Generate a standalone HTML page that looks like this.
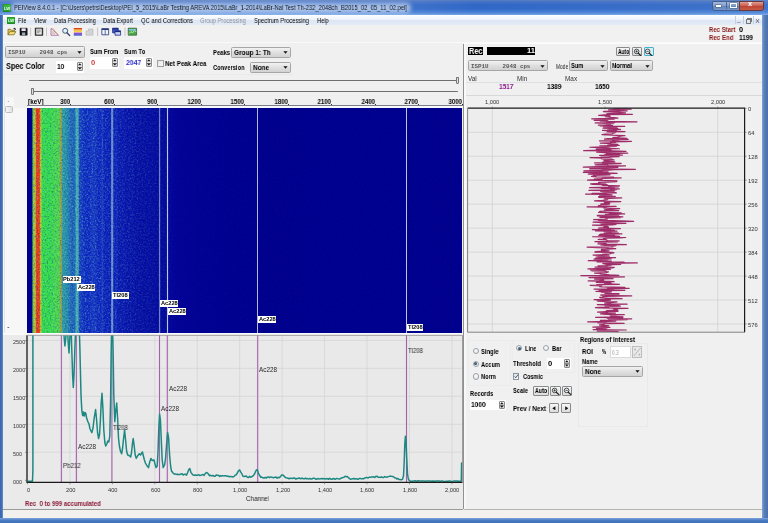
<!DOCTYPE html>
<html><head><meta charset="utf-8"><title>PEIView 8.4.0.1</title>
<style>
html,body{margin:0;padding:0;}
body{width:768px;height:523px;overflow:hidden;position:relative;background:#f0f0f0;font-family:"Liberation Sans",sans-serif;}
.b{position:absolute;display:block;}
.t{position:absolute;white-space:pre;will-change:transform;}
</style></head><body>
<div class="b" style="left:0px;top:0px;width:768px;height:523px;background:#4f84cf;"></div>
<div class="b" style="left:0px;top:0px;width:768px;height:15px;background:linear-gradient(180deg,#5a7ebc 0%,#4472c6 10%,#3067c5 32%,#3069c8 60%,#4a82d6 84%,#74a4e6 100%);"></div>
<div class="b" style="left:0px;top:0px;width:768px;height:15px;background:linear-gradient(90deg,rgba(255,255,255,.12) 0%,rgba(255,255,255,.06) 55%,rgba(255,255,255,.0) 62%,rgba(255,255,255,.08) 100%);"></div>
<div class="b" style="left:0px;top:15px;width:3.4px;height:508px;background:linear-gradient(90deg,#3a66b0,#4470b8 70%,#7a9fd8);"></div>
<div class="b" style="left:762.4px;top:15px;width:5.6px;height:508px;background:linear-gradient(90deg,#86a6d6,#5a80ba 35%,#4a70aa);"></div>
<div class="b" style="left:0px;top:518.3px;width:768px;height:4.7px;background:linear-gradient(180deg,#7fa6dc,#4a7cc4 45%,#3f70b8);"></div>
<div class="b" style="left:3.2px;top:4px;width:8px;height:7.6px;background:linear-gradient(180deg,#3fc03f,#1f9a2a);border-radius:1px;box-shadow:inset 0 0 0 .5px #1d7d1d;"></div>
<div class="t" style="left:4.20px;top:6.58px;font:bold 4.2px/4.83px 'Liberation Sans',sans-serif;color:#e8ffe8;transform:scaleX(0.9527);transform-origin:0 50%;">LW</div>
<div class="b" style="left:11px;top:2.5px;width:400px;height:10.5px;background:rgba(235,242,252,.62);border-radius:5px;filter:blur(2.2px);"></div>
<div class="t" style="left:14.20px;top:4.26px;font:7.2px/8.28px 'Liberation Sans',sans-serif;color:#101820;transform:scaleX(0.8059);transform-origin:0 50%;">PEIView 8.4.0.1 - [C:\Users\petrs\Desktop\PEI_5_2015\LaBr Testing AREVA 2015\LaBr_1-2014\LaBr-NaI Test Th-232_2048ch_B2015_02_05_11_02.pei]</div>
<div class="b" style="left:712px;top:0.8px;width:27px;height:8.6px;background:linear-gradient(180deg,#a4b8da,#7f9cca 48%,#6486be 52%,#7696c8);border:.5px solid #41608f;border-radius:1px 0 0 3px;"></div>
<div class="b" style="left:739px;top:0.8px;width:23.4px;height:8.6px;background:linear-gradient(180deg,#dca096,#c95c4e 48%,#bd4232 52%,#c65c4a);border:.5px solid #6a3838;border-radius:0 1px 3px 0;"></div>
<div class="b" style="left:725.5px;top:0.8px;width:0.6px;height:8.6px;background:#4a6898;"></div>
<div class="b" style="left:716px;top:5.2px;width:5px;height:1.6px;background:#fff;box-shadow:0 0 0 .4px #456;"></div>
<div class="b" style="left:730px;top:2.5px;width:4.5px;height:3.6px;border:1px solid #fff;box-shadow:0 0 0 .4px #456;"></div>
<div class="t" style="left:748.41px;top:0.49px;font:bold 7.5px/8.62px 'Liberation Sans',sans-serif;color:#fff;">x</div>
<div class="b" style="left:3px;top:15px;width:759px;height:10px;background:linear-gradient(180deg,#fdfeff 0%,#eef3fb 45%,#dde6f4 55%,#e3ebf7 100%);"></div>
<div class="b" style="left:6.5px;top:16.5px;width:8.2px;height:7.3px;background:linear-gradient(180deg,#3fc03f,#1f9a2a);border-radius:1px;box-shadow:inset 0 0 0 .5px #1d7d1d;"></div>
<div class="t" style="left:7.60px;top:18.79px;font:bold 4.2px/4.83px 'Liberation Sans',sans-serif;color:#e8ffe8;transform:scaleX(0.9527);transform-origin:0 50%;">LW</div>
<div class="t" style="left:18.30px;top:16.86px;font:7.2px/8.28px 'Liberation Sans',sans-serif;color:#000;transform:scaleX(0.7241);transform-origin:0 50%;">File</div>
<div class="t" style="left:34.30px;top:16.86px;font:7.2px/8.28px 'Liberation Sans',sans-serif;color:#000;transform:scaleX(0.8013);transform-origin:0 50%;">View</div>
<div class="t" style="left:54.00px;top:16.86px;font:7.2px/8.28px 'Liberation Sans',sans-serif;color:#000;transform:scaleX(0.7951);transform-origin:0 50%;">Data Processing</div>
<div class="t" style="left:103.30px;top:16.86px;font:7.2px/8.28px 'Liberation Sans',sans-serif;color:#000;transform:scaleX(0.7891);transform-origin:0 50%;">Data Export</div>
<div class="t" style="left:140.70px;top:16.86px;font:7.2px/8.28px 'Liberation Sans',sans-serif;color:#000;transform:scaleX(0.8173);transform-origin:0 50%;">QC and Corrections</div>
<div class="t" style="left:200.00px;top:16.86px;font:7.2px/8.28px 'Liberation Sans',sans-serif;color:#8a8f98;transform:scaleX(0.7983);transform-origin:0 50%;">Group Processing</div>
<div class="t" style="left:254.30px;top:16.86px;font:7.2px/8.28px 'Liberation Sans',sans-serif;color:#000;transform:scaleX(0.8038);transform-origin:0 50%;">Spectrum Processing</div>
<div class="t" style="left:317.00px;top:16.86px;font:7.2px/8.28px 'Liberation Sans',sans-serif;color:#000;transform:scaleX(0.7902);transform-origin:0 50%;">Help</div>
<div class="t" style="left:736.69px;top:15.46px;font:6.5px/7.47px 'Liberation Sans',sans-serif;color:#667;">_</div>
<div class="b" style="left:745.5px;top:18.5px;width:3.6px;height:3px;border:.7px solid #777;"></div>
<div class="b" style="left:747px;top:17.5px;width:3.6px;height:3px;border:.7px solid #777;border-left:0;border-bottom:0;"></div>
<div class="t" style="left:755.32px;top:16.51px;font:8.5px/9.77px 'Liberation Sans',sans-serif;color:#667;">×</div>
<div class="b" style="left:734.5px;top:16px;width:0.5px;height:8px;background:#c5cfdf;"></div>
<div class="b" style="left:743px;top:16px;width:0.5px;height:8px;background:#c5cfdf;"></div>
<div class="b" style="left:752.5px;top:16px;width:0.5px;height:8px;background:#c5cfdf;"></div>
<div class="b" style="left:3px;top:25px;width:759px;height:493px;background:#f0f0f0;"></div>
<div class="b" style="left:3px;top:25px;width:759px;height:18px;background:#f1f1f2;"></div>
<div class="b" style="left:3px;top:42.4px;width:759px;height:0.9px;background:#f9f9f9;"></div>
<svg class="b" style="left:3px;top:25px" width="140" height="14" viewBox="3 25 140 14">
<g stroke-linejoin="round">
<path d="M8 34.8 V29.3 h2.6 l.8 1 h3.2 v1.2" fill="#e9c75a" stroke="#6b5a14" stroke-width=".7"/>
<path d="M8 34.8 l1.8-3.2 h6 l-1.8 3.2z" fill="#f5de7a" stroke="#6b5a14" stroke-width=".7"/>
<path d="M13.2 28.2 q1.6-.9 2.2.6 l.6-.5 -.2 1.7 -1.6-.3 .6-.5 q-.5-.8-1.6-.4z" fill="#333"/>
<rect x="20" y="28.2" width="7.2" height="7" fill="#1a1a2a" stroke="#000" stroke-width=".5"/>
<rect x="21.5" y="28.4" width="4.2" height="2.6" fill="#e8e8e8"/>
<rect x="22" y="32.5" width="3.2" height="2.6" fill="#9aa"/>
<rect x="35.2" y="28" width="7.6" height="7.4" fill="#2a2a2a" stroke="#000" stroke-width=".5"/>
<rect x="36.2" y="28.6" width="5.6" height="6" fill="#e6e6e6"/>
<path d="M37 30h3.6M37 31.3h3.6M37 32.6h2.4" stroke="#555" stroke-width=".5"/>
<path d="M51 28.3 V35.3 H58.6 Z" fill="#f4eee0" stroke="#8a3a8a" stroke-width=".6"/><path d="M52.6 31.6 V33.8 H55 Z" fill="#fff" stroke="#a86aa8" stroke-width=".4"/>
<path d="M52.6 28 l5.2 6.4" stroke="#c8a24a" stroke-width=".7"/>
<circle cx="65.2" cy="30.8" r="2.5" fill="#dff1fb" stroke="#3b4a6a" stroke-width=".9"/>
<path d="M67 32.8 l2.6 2.6" stroke="#3b4a6a" stroke-width="1.4" stroke-linecap="round"/>
<rect x="73.8" y="28" width="8.2" height="1.3" fill="#e03a1a"/><rect x="73.8" y="29.3" width="8.2" height="1.3" fill="#f08a20"/>
<rect x="73.8" y="30.6" width="8.2" height="1.3" fill="#f4d62a"/><rect x="73.8" y="31.9" width="8.2" height="1.2" fill="#d8a0c8"/>
<rect x="73.8" y="33.1" width="8.2" height="1.2" fill="#8040c0"/><rect x="73.8" y="34.3" width="8.2" height="1.3" fill="#3048c8"/>
<path d="M86 35.2 V31 h2.5 V29 h4.5 v6.2z" fill="#d8d8d8" stroke="#b4b4b4" stroke-width=".6"/>
<path d="M88.5 31 h4.5M88.5 33h4.5" stroke="#c0c0c0" stroke-width=".5"/>
<rect x="101.8" y="28.6" width="6.8" height="6.2" fill="#eef3fb" stroke="#2a3a7a" stroke-width=".8"/>
<rect x="101.8" y="28.6" width="6.8" height="1.4" fill="#2a3a7a"/>
<path d="M105.2 30 v4.8" stroke="#2a3a7a" stroke-width=".7"/>
<rect x="112.6" y="28.2" width="5.6" height="4.6" fill="#4a5ab8" stroke="#1a2a8a" stroke-width=".8"/>
<rect x="112.6" y="28.2" width="5.6" height="1.3" fill="#1a2a8a"/>
<rect x="115" y="30.8" width="5.6" height="4.4" fill="#c8d2f4" stroke="#1a2a8a" stroke-width=".8"/>
<rect x="115" y="30.8" width="5.6" height="1.3" fill="#1a2a8a"/>
<rect x="128.2" y="28.2" width="8.4" height="7" fill="#4aa84a" stroke="#2a5a2a" stroke-width=".7"/>
<path d="M129 33.6 l2-2 1.6 1.2 2-2.4 1.6 1.6" stroke="#e8f4c8" stroke-width=".8" fill="none"/>
<rect x="129" y="29" width="6.8" height="1.6" fill="#7fc7e8"/>
</g>
<path d="M30.6 27.5v8.5M46.5 27.5v8.5M97.6 27.5v8.5M125 27.5v8.5" stroke="#a8a8a8" stroke-width=".6"/>
</svg>
<div class="t" style="left:709.30px;top:26.20px;font:bold 7.3px/8.39px 'Liberation Sans',sans-serif;color:#8b1a1a;transform:scaleX(0.8268);transform-origin:0 50%;">Rec Start</div>
<div class="t" style="left:739.00px;top:26.20px;font:bold 7.3px/8.39px 'Liberation Sans',sans-serif;color:#000;">0</div>
<div class="t" style="left:709.30px;top:34.00px;font:bold 7.3px/8.39px 'Liberation Sans',sans-serif;color:#8b1a1a;transform:scaleX(0.8389);transform-origin:0 50%;">Rec End</div>
<div class="t" style="left:739.00px;top:34.00px;font:bold 7.3px/8.39px 'Liberation Sans',sans-serif;color:#000;transform:scaleX(0.8841);transform-origin:0 50%;">1199</div>
<div class="b" style="left:5px;top:46.4px;width:79.6px;height:11.4px;background:linear-gradient(180deg,#f2f2f2,#dedede 55%,#d2d2d2);border:.6px solid #a6a6a6;border-radius:1.5px;box-sizing:border-box;"></div>
<div class="t" style="left:8.10px;top:49.77px;font:bold 5.8px/6.67px 'Liberation Mono',monospace;color:#555;transform:scaleX(1.0038);transform-origin:0 50%;">ISP1U&nbsp;&nbsp;&nbsp;&nbsp;2048&nbsp;cps</div>
<svg class="b" style="left:76.6px;top:50.9px" width="5" height="3" viewBox="0 0 5 3"><path d="M.4 .2h4.2L2.5 2.8z" fill="#111"/></svg>
<div class="t" style="left:5.60px;top:62.15px;font:bold 8.6px/9.89px 'Liberation Sans',sans-serif;color:#000;transform:scaleX(0.8503);transform-origin:0 50%;">Spec Color</div>
<div class="b" style="left:56px;top:61px;width:27.5px;height:11.5px;background:#fff;"></div>
<div class="t" style="left:57.20px;top:63.08px;font:bold 7.6px/8.74px 'Liberation Sans',sans-serif;color:#000;transform:scaleX(0.8518);transform-origin:0 50%;">10</div>
<div class="b" style="left:77.0px;top:62.2px;width:6px;height:9.1px;background:linear-gradient(180deg,#f4f4f4,#d6d6d6);border:.5px solid #8a8a8a;border-radius:1px;box-sizing:border-box;"></div>
<div class="b" style="left:77.0px;top:66.5px;width:6px;height:0.5px;background:#8a8a8a;"></div>
<svg class="b" style="left:78.2px;top:63.4px" width="3.6" height="6.7" viewBox="0 0 3.6 6.7"><path d="M0 2.2L1.8 .2 3.6 2.2z" fill="#111"/><path d="M0 4.5L1.8 6.5 3.6 4.5z" fill="#111"/></svg>
<div class="t" style="left:89.70px;top:48.43px;font:bold 7.6px/8.74px 'Liberation Sans',sans-serif;color:#000;transform:scaleX(0.7530);transform-origin:0 50%;">Sum From</div>
<div class="t" style="left:124.00px;top:48.43px;font:bold 7.6px/8.74px 'Liberation Sans',sans-serif;color:#000;transform:scaleX(0.7802);transform-origin:0 50%;">Sum To</div>
<div class="b" style="left:90px;top:57px;width:28.5px;height:11.5px;background:#fff;"></div>
<div class="t" style="left:91.20px;top:59.08px;font:bold 7.6px/8.74px 'Liberation Sans',sans-serif;color:#d23c3c;">0</div>
<div class="b" style="left:112.0px;top:58.2px;width:6px;height:9.1px;background:linear-gradient(180deg,#f4f4f4,#d6d6d6);border:.5px solid #8a8a8a;border-radius:1px;box-sizing:border-box;"></div>
<div class="b" style="left:112.0px;top:62.5px;width:6px;height:0.5px;background:#8a8a8a;"></div>
<svg class="b" style="left:113.2px;top:59.4px" width="3.6" height="6.7" viewBox="0 0 3.6 6.7"><path d="M0 2.2L1.8 .2 3.6 2.2z" fill="#111"/><path d="M0 4.5L1.8 6.5 3.6 4.5z" fill="#111"/></svg>
<div class="b" style="left:124px;top:57px;width:28.5px;height:11.5px;background:#fff;"></div>
<div class="t" style="left:126.00px;top:59.08px;font:bold 7.6px/8.74px 'Liberation Sans',sans-serif;color:#2a2ac8;transform:scaleX(0.8991);transform-origin:0 50%;">2047</div>
<div class="b" style="left:146.0px;top:58.2px;width:6px;height:9.1px;background:linear-gradient(180deg,#f4f4f4,#d6d6d6);border:.5px solid #8a8a8a;border-radius:1px;box-sizing:border-box;"></div>
<div class="b" style="left:146.0px;top:62.5px;width:6px;height:0.5px;background:#8a8a8a;"></div>
<svg class="b" style="left:147.2px;top:59.4px" width="3.6" height="6.7" viewBox="0 0 3.6 6.7"><path d="M0 2.2L1.8 .2 3.6 2.2z" fill="#111"/><path d="M0 4.5L1.8 6.5 3.6 4.5z" fill="#111"/></svg>
<div class="b" style="left:157px;top:60px;width:6.5px;height:6.5px;background:linear-gradient(135deg,#e4e4e4,#fafafa);border:.6px solid #9aa0a8;box-sizing:border-box;"></div>
<div class="t" style="left:165.30px;top:59.84px;font:bold 7.4px/8.51px 'Liberation Sans',sans-serif;color:#000;transform:scaleX(0.8384);transform-origin:0 50%;">Net Peak Area</div>
<div class="t" style="left:213.20px;top:48.94px;font:bold 7.4px/8.51px 'Liberation Sans',sans-serif;color:#000;transform:scaleX(0.7945);transform-origin:0 50%;">Peaks</div>
<div class="b" style="left:231.3px;top:46.6px;width:60px;height:11.5px;background:linear-gradient(180deg,#f2f2f2,#dedede 55%,#d2d2d2);border:.6px solid #a6a6a6;border-radius:1.5px;box-sizing:border-box;"></div>
<div class="t" style="left:233.70px;top:48.92px;font:bold 7.7px/8.85px 'Liberation Sans',sans-serif;color:#000;transform:scaleX(0.8435);transform-origin:0 50%;">Group 1: Th</div>
<svg class="b" style="left:283.3px;top:51.15px" width="5" height="3" viewBox="0 0 5 3"><path d="M.4 .2h4.2L2.5 2.8z" fill="#111"/></svg>
<div class="t" style="left:213.20px;top:64.05px;font:bold 7.4px/8.51px 'Liberation Sans',sans-serif;color:#000;transform:scaleX(0.7763);transform-origin:0 50%;">Conversion</div>
<div class="b" style="left:250.2px;top:61.6px;width:41.1px;height:11.5px;background:linear-gradient(180deg,#f2f2f2,#dedede 55%,#d2d2d2);border:.6px solid #a6a6a6;border-radius:1.5px;box-sizing:border-box;"></div>
<div class="t" style="left:252.60px;top:64.04px;font:bold 7.5px/8.62px 'Liberation Sans',sans-serif;color:#000;transform:scaleX(0.8641);transform-origin:0 50%;">None</div>
<svg class="b" style="left:283.3px;top:66.14999999999999px" width="5" height="3" viewBox="0 0 5 3"><path d="M.4 .2h4.2L2.5 2.8z" fill="#111"/></svg>
<div class="b" style="left:3px;top:73.7px;width:290px;height:0.6px;background:#e9e9e9;"></div>
<div class="b" style="left:29px;top:79.5px;width:428px;height:1.1px;background:#6e6e6e;border-radius:1px;"></div>
<div class="b" style="left:32.5px;top:90.5px;width:425px;height:1.1px;background:#6e6e6e;border-radius:1px;"></div>
<div class="b" style="left:30.9px;top:88px;width:2.7px;height:7.2px;background:linear-gradient(90deg,#f8f8f8,#c8c8c8);border:.5px solid #777;border-radius:1px 1px 2px 2px;box-sizing:border-box;"></div>
<div class="b" style="left:456.2px;top:76.8px;width:2.7px;height:7.4px;background:linear-gradient(90deg,#f8f8f8,#c8c8c8);border:.5px solid #777;border-radius:1px 1px 2px 2px;box-sizing:border-box;"></div>
<div class="b" style="left:3.4px;top:97px;width:23.6px;height:236px;background:#f7f7f7;"></div>
<div class="b" style="left:4px;top:97px;width:0.6px;height:238px;background:#e4e4e4;"></div>
<svg class="b" style="left:7.4px;top:100.6px" width="2.6" height="1.8" viewBox="0 0 4 3"><path d="M0 2.6L2 .4 4 2.6z" fill="#555"/></svg>
<svg class="b" style="left:7.4px;top:326.6px" width="2.6" height="1.8" viewBox="0 0 4 3"><path d="M0 .4L2 2.6 4 .4z" fill="#444"/></svg>
<div class="b" style="left:4.6px;top:106.2px;width:8px;height:6.8px;background:linear-gradient(90deg,#f6f6f6,#e2e2e2);border:.6px solid #bcbcbc;border-radius:1.5px;box-sizing:border-box;"></div>
<div class="b" style="left:14px;top:96.5px;width:449px;height:11px;background:#f0f0f0;"></div>
<div class="t" style="left:27.60px;top:97.82px;font:bold 6.4px/7.36px 'Liberation Sans',sans-serif;color:#000;transform:scaleX(0.9841);transform-origin:0 50%;">[keV]</div>
<div class="t" style="left:59.16px;top:97.89px;font:bold 6.8px/7.82px 'Liberation Sans',sans-serif;color:#000;transform:scaleX(0.8991);transform-origin:100% 50%;">300</div>
<div class="b" style="left:70.3px;top:104.2px;width:0.8px;height:1.9px;background:#333;"></div>
<div class="t" style="left:102.66px;top:97.89px;font:bold 6.8px/7.82px 'Liberation Sans',sans-serif;color:#000;transform:scaleX(0.8991);transform-origin:100% 50%;">600</div>
<div class="b" style="left:113.8px;top:104.2px;width:0.8px;height:1.9px;background:#333;"></div>
<div class="t" style="left:146.16px;top:97.89px;font:bold 6.8px/7.82px 'Liberation Sans',sans-serif;color:#000;transform:scaleX(0.8991);transform-origin:100% 50%;">900</div>
<div class="b" style="left:157.29999999999998px;top:104.2px;width:0.8px;height:1.9px;background:#333;"></div>
<div class="t" style="left:185.87px;top:97.89px;font:bold 6.8px/7.82px 'Liberation Sans',sans-serif;color:#000;transform:scaleX(0.8991);transform-origin:100% 50%;">1200</div>
<div class="b" style="left:200.79999999999998px;top:104.2px;width:0.8px;height:1.9px;background:#333;"></div>
<div class="t" style="left:229.37px;top:97.89px;font:bold 6.8px/7.82px 'Liberation Sans',sans-serif;color:#000;transform:scaleX(0.8991);transform-origin:100% 50%;">1500</div>
<div class="b" style="left:244.29999999999998px;top:104.2px;width:0.8px;height:1.9px;background:#333;"></div>
<div class="t" style="left:272.87px;top:97.89px;font:bold 6.8px/7.82px 'Liberation Sans',sans-serif;color:#000;transform:scaleX(0.8991);transform-origin:100% 50%;">1800</div>
<div class="b" style="left:287.8px;top:104.2px;width:0.8px;height:1.9px;background:#333;"></div>
<div class="t" style="left:316.37px;top:97.89px;font:bold 6.8px/7.82px 'Liberation Sans',sans-serif;color:#000;transform:scaleX(0.8991);transform-origin:100% 50%;">2100</div>
<div class="b" style="left:331.3px;top:104.2px;width:0.8px;height:1.9px;background:#333;"></div>
<div class="t" style="left:359.87px;top:97.89px;font:bold 6.8px/7.82px 'Liberation Sans',sans-serif;color:#000;transform:scaleX(0.8991);transform-origin:100% 50%;">2400</div>
<div class="b" style="left:374.8px;top:104.2px;width:0.8px;height:1.9px;background:#333;"></div>
<div class="t" style="left:403.37px;top:97.89px;font:bold 6.8px/7.82px 'Liberation Sans',sans-serif;color:#000;transform:scaleX(0.8991);transform-origin:100% 50%;">2700</div>
<div class="b" style="left:418.3px;top:104.2px;width:0.8px;height:1.9px;background:#333;"></div>
<div class="t" style="left:446.87px;top:97.89px;font:bold 6.8px/7.82px 'Liberation Sans',sans-serif;color:#000;transform:scaleX(0.8991);transform-origin:100% 50%;">3000</div>
<div class="b" style="left:461.8px;top:104.2px;width:0.8px;height:1.9px;background:#333;"></div>
<div class="b" style="left:27px;top:105.2px;width:435.5px;height:0.9px;background:#7a7e88;"></div>
<div class="b" style="left:27px;top:106.1px;width:435.5px;height:1.8px;background:#f8f8fa;"></div>
<svg class="b" style="left:27px;top:107.8px" width="435.3" height="225.2" viewBox="0 0 435.3 225.2">
<defs>
<linearGradient id="hg" gradientUnits="userSpaceOnUse" x1="0" y1="0" x2="435.3" y2="0"><stop offset="0.00000" stop-color="#00008e"/><stop offset="0.01195" stop-color="#00008e"/><stop offset="0.01263" stop-color="#78cc34"/><stop offset="0.01677" stop-color="#9ccc2e"/><stop offset="0.01907" stop-color="#e0c422"/><stop offset="0.02045" stop-color="#f04818"/><stop offset="0.02297" stop-color="#f03210"/><stop offset="0.02849" stop-color="#f03a12"/><stop offset="0.03032" stop-color="#f0a020"/><stop offset="0.03239" stop-color="#a4e030"/><stop offset="0.03446" stop-color="#36e046"/><stop offset="0.05284" stop-color="#34de48"/><stop offset="0.06432" stop-color="#48dc46"/><stop offset="0.07443" stop-color="#58d646"/><stop offset="0.07627" stop-color="#8cb044"/><stop offset="0.07811" stop-color="#a09a42"/><stop offset="0.07994" stop-color="#86a054"/><stop offset="0.08155" stop-color="#2e9ca0"/><stop offset="0.08730" stop-color="#2a96a8"/><stop offset="0.09304" stop-color="#2486b0"/><stop offset="0.09878" stop-color="#2070b8"/><stop offset="0.10453" stop-color="#1c5cc0"/><stop offset="0.10912" stop-color="#1e66bc"/><stop offset="0.11165" stop-color="#2a88b4"/><stop offset="0.11394" stop-color="#4cb6ae"/><stop offset="0.11762" stop-color="#44aab2"/><stop offset="0.11992" stop-color="#1844c2"/><stop offset="0.13094" stop-color="#0e2ac4"/><stop offset="0.14243" stop-color="#0c26c4"/><stop offset="0.14932" stop-color="#1632c6"/><stop offset="0.15851" stop-color="#1430c4"/><stop offset="0.16311" stop-color="#0c22c0"/><stop offset="0.17000" stop-color="#0d22c0"/><stop offset="0.17321" stop-color="#1a3cc6"/><stop offset="0.17689" stop-color="#0c1ebc"/><stop offset="0.19182" stop-color="#0b1cba"/><stop offset="0.19366" stop-color="#4a70cc"/><stop offset="0.19550" stop-color="#a4bcdc"/><stop offset="0.19734" stop-color="#3a60c8"/><stop offset="0.19986" stop-color="#0b1ab6"/><stop offset="0.20584" stop-color="#1228bc"/><stop offset="0.20905" stop-color="#0a16b2"/><stop offset="0.22398" stop-color="#0a16b0"/><stop offset="0.22743" stop-color="#0812ac"/><stop offset="0.24351" stop-color="#0812aa"/><stop offset="0.24810" stop-color="#060ea6"/><stop offset="0.28256" stop-color="#050ca2"/><stop offset="0.30186" stop-color="#040a9e"/><stop offset="0.30324" stop-color="#1a2eac"/><stop offset="0.30462" stop-color="#8890cc"/><stop offset="0.30623" stop-color="#1828a6"/><stop offset="0.30783" stop-color="#04089c"/><stop offset="0.32001" stop-color="#04089a"/><stop offset="0.32139" stop-color="#1a2ea8"/><stop offset="0.32277" stop-color="#c4cae6"/><stop offset="0.32414" stop-color="#1426a0"/><stop offset="0.32621" stop-color="#04049a"/><stop offset="0.39743" stop-color="#020292"/><stop offset="0.52791" stop-color="#00008f"/><stop offset="0.52906" stop-color="#b4bad8"/><stop offset="0.53067" stop-color="#b4bad8"/><stop offset="0.53182" stop-color="#00008e"/><stop offset="0.86975" stop-color="#00008e"/><stop offset="0.87089" stop-color="#c0c4dc"/><stop offset="0.87273" stop-color="#c0c4dc"/><stop offset="0.87388" stop-color="#00008e"/><stop offset="1.00000" stop-color="#00008e"/></linearGradient>
<filter id="nz" x="0" y="0" width="100%" height="100%" color-interpolation-filters="sRGB">
<feTurbulence type="fractalNoise" baseFrequency="0.6" numOctaves="2" seed="7" result="n"/>
<feColorMatrix in="n" type="matrix" values="0 0 0 0 .55  0 0 0 0 .95  0 0 0 0 .85  .85 .6 0 0 -.66" result="w"/>
<feColorMatrix in="n" type="matrix" values="0 0 0 0 0  0 0 0 0 .12  0 0 0 0 .45  0 .75 .75 0 -.68" result="k"/>
<feMerge><feMergeNode in="SourceGraphic"/><feMergeNode in="k"/><feMergeNode in="w"/></feMerge>
</filter>
<linearGradient id="fade" gradientUnits="userSpaceOnUse" x1="0" y1="0" x2="435.3" y2="0"><stop offset="0" stop-color="#fff"/><stop offset=".12" stop-color="#fff"/><stop offset=".2" stop-color="#b0b0b0"/><stop offset=".31" stop-color="#444"/><stop offset=".34" stop-color="#0c0c0c"/><stop offset="1" stop-color="#080808"/></linearGradient>
<mask id="mk"><rect width="435.3" height="225.2" fill="url(#fade)"/></mask>
</defs>
<rect width="435.3" height="225.2" fill="url(#hg)"/>
<g mask="url(#mk)"><rect x="5.5" width="429.8" height="225.2" fill="url(#hg)" filter="url(#nz)"/></g>
<rect x="0" width="5.4" height="225.2" fill="#00008e"/>
</svg>
<div class="b" style="left:62.5px;top:276px;width:18.2px;height:6.5px;background:#fff;"></div>
<div class="t" style="left:63.40px;top:276.22px;font:bold 5.7px/6.55px 'Liberation Sans',sans-serif;color:#000;transform:scaleX(0.9766);transform-origin:0 50%;">Pb212</div>
<div class="b" style="left:76.8px;top:284px;width:18.2px;height:6.5px;background:#fff;"></div>
<div class="t" style="left:77.70px;top:284.22px;font:bold 5.7px/6.55px 'Liberation Sans',sans-serif;color:#000;transform:scaleX(0.9765);transform-origin:0 50%;">Ac228</div>
<div class="b" style="left:112.2px;top:292.2px;width:16.4px;height:6.5px;background:#fff;"></div>
<div class="t" style="left:113.10px;top:292.42px;font:bold 5.7px/6.55px 'Liberation Sans',sans-serif;color:#000;transform:scaleX(1.0018);transform-origin:0 50%;">Tl208</div>
<div class="b" style="left:159.8px;top:300.2px;width:18.2px;height:6.5px;background:#fff;"></div>
<div class="t" style="left:160.70px;top:300.42px;font:bold 5.7px/6.55px 'Liberation Sans',sans-serif;color:#000;transform:scaleX(0.9765);transform-origin:0 50%;">Ac228</div>
<div class="b" style="left:167.8px;top:308.2px;width:18.2px;height:6.5px;background:#fff;"></div>
<div class="t" style="left:168.70px;top:308.42px;font:bold 5.7px/6.55px 'Liberation Sans',sans-serif;color:#000;transform:scaleX(0.9765);transform-origin:0 50%;">Ac228</div>
<div class="b" style="left:257.8px;top:316.2px;width:18.2px;height:6.5px;background:#fff;"></div>
<div class="t" style="left:258.70px;top:316.42px;font:bold 5.7px/6.55px 'Liberation Sans',sans-serif;color:#000;transform:scaleX(0.9765);transform-origin:0 50%;">Ac228</div>
<div class="b" style="left:406.6px;top:324.2px;width:16.4px;height:6.5px;background:#fff;"></div>
<div class="t" style="left:407.50px;top:324.42px;font:bold 5.7px/6.55px 'Liberation Sans',sans-serif;color:#000;transform:scaleX(1.0018);transform-origin:0 50%;">Tl208</div>
<div class="b" style="left:3.4px;top:333px;width:459.6px;height:2.5px;background:#fafafa;"></div>
<div class="b" style="left:3px;top:335px;width:460px;height:174px;background:#eaeaea;"></div>
<svg class="b" style="left:0;top:330px" width="468" height="185" viewBox="0 330 468 185"><clipPath id="cp"><rect x="27.0" y="335.3" width="435.5" height="147.0"/></clipPath><rect x="27.0" y="335.3" width="435.5" height="147.0" fill="#e9e9e9"/><path d="M69.94 335.3V482.3M112.38 335.3V482.3M154.82 335.3V482.3M197.26 335.3V482.3M239.70 335.3V482.3M282.14 335.3V482.3M324.58 335.3V482.3M367.02 335.3V482.3M409.46 335.3V482.3M451.90 335.3V482.3M27.0 452.17H462.5M27.0 424.24H462.5M27.0 396.31H462.5M27.0 368.38H462.5M27.0 340.45H462.5" stroke="#d2d2d2" stroke-width=".7" fill="none"/><path d="M61.4 335.3V482.3M76.4 335.3V482.3M111.9 335.3V482.3M159.5 335.3V482.3M167.3 335.3V482.3M257.7 335.3V482.3M406.5 335.3V482.3" stroke="#e6cfe8" stroke-width="2" fill="none"/><path d="M61.4 335.3V482.3M76.4 335.3V482.3M111.9 335.3V482.3M159.5 335.3V482.3M167.3 335.3V482.3M257.7 335.3V482.3M406.5 335.3V482.3" stroke="#8a4c92" stroke-width=".8" fill="none"/><g clip-path="url(#cp)"><path d="M27.6 481.3 32.5 481.3 32.9 470.0 32.9 330.0 63.7 330.0 64.2 338.0 64.9 346.0 65.6 340.0 66.5 330.0 67.5 330.0 68.3 344.0 69.0 353.0 69.6 342.0 70.3 330.0 71.2 330.0 71.8 350.0 72.6 375.0 73.3 387.5 74.0 375.0 74.8 350.0 75.6 330.0 79.3 330.0 79.8 345.0 80.4 370.0 81.0 395.0 81.8 410.0 82.6 415.5 83.4 412.0 84.2 416.0 85.0 412.5 85.8 413.5 86.6 418.0 87.9 421.7 89.0 424.0 90.0 429.0 91.0 431.0 91.9 432.6 93.0 428.0 94.2 418.0 95.6 409.5 96.6 420.0 97.6 433.0 98.6 438.5 99.6 434.0 100.4 420.0 101.2 403.0 102.0 393.3 102.9 408.0 103.8 430.0 104.8 442.0 105.7 446.0 106.8 444.0 107.8 441.0 108.8 442.0 109.8 436.0 110.6 400.0 111.2 350.0 111.6 330.0 112.6 330.0 113.1 350.0 113.8 395.0 114.8 421.7 115.6 412.0 116.7 403.0 117.6 418.0 118.5 438.0 119.4 446.0 120.4 451.0 121.6 453.8 122.6 448.0 123.6 438.0 124.6 430.0 125.6 440.0 126.6 451.0 127.7 455.0 129.0 455.5 130.7 457.0 131.6 452.0 132.4 444.0 133.2 438.5 134.2 446.0 135.2 455.0 136.2 458.4 137.5 456.0 139.3 453.8 140.5 455.0 142.4 452.0 143.4 456.0 144.4 460.0 145.4 463.0 146.8 465.5 148.5 467.6 149.7 462.0 150.9 458.4 152.2 460.5 154.0 460.0 155.0 464.0 156.0 467.6 157.2 466.0 158.0 452.0 158.8 428.0 159.6 414.0 160.4 420.0 161.3 440.0 162.2 460.0 163.2 467.6 164.0 466.0 164.7 464.5 165.6 458.0 166.6 444.0 167.6 432.4 168.6 438.0 169.6 455.0 170.6 466.0 171.4 470.7 173.0 473.0 174.5 474.3 175.5 473.9 176.6 474.4 177.7 474.2 178.8 474.6 179.9 474.6 181.0 473.9 182.1 473.8 183.2 475.0 184.3 474.3 185.4 474.2 186.5 475.1 187.6 472.8 188.7 469.8 189.8 468.5 190.9 472.3 192.0 473.9 193.1 475.0 194.2 475.4 195.3 475.0 196.4 475.3 197.5 475.3 198.6 474.5 199.7 475.5 200.8 475.3 201.9 474.9 203.0 474.5 204.1 475.4 205.2 473.7 206.3 472.5 207.4 472.9 208.5 474.3 209.6 475.7 210.7 475.3 211.8 475.9 212.9 475.5 214.0 476.2 215.1 476.2 216.2 475.1 217.3 475.2 218.4 475.3 219.5 476.4 220.6 475.7 221.7 476.0 222.8 475.6 223.9 475.9 225.0 475.8 226.1 475.8 227.2 476.2 228.3 476.2 229.4 476.7 230.5 476.4 231.6 476.8 232.0 476.7 233.1 476.9 234.2 476.3 235.3 475.1 236.4 474.7 237.5 472.6 238.6 470.6 239.7 470.0 240.8 472.2 241.9 473.8 243.0 476.2 244.1 476.5 245.2 476.3 246.3 476.1 247.4 477.2 248.5 477.5 249.6 476.2 250.7 477.3 251.8 476.7 252.9 476.0 254.0 474.8 255.1 472.6 256.2 470.2 257.3 469.6 258.4 473.4 259.5 475.2 260.6 477.2 261.7 477.0 262.8 477.8 263.9 478.0 265.0 477.4 266.1 478.1 267.2 477.2 268.3 476.9 269.4 477.7 270.5 476.9 271.6 477.2 272.7 477.5 273.8 477.8 274.9 477.2 276.0 477.1 277.1 478.3 278.2 477.3 279.3 477.8 280.4 476.8 281.5 475.1 282.6 474.9 283.7 475.7 284.8 477.0 285.9 477.7 287.0 478.1 288.1 478.3 289.2 478.8 290.3 478.3 291.4 478.2 292.5 478.6 293.6 478.0 294.7 478.1 295.8 479.1 296.9 478.5 298.0 478.6 299.1 477.9 300.0 478.5 301.1 478.7 302.2 478.0 303.3 478.8 304.4 478.8 305.5 478.1 306.6 478.8 307.7 478.6 308.8 478.9 309.9 478.5 311.0 479.0 312.1 479.0 313.2 478.2 314.3 478.2 315.4 479.0 316.5 479.3 317.6 478.5 318.7 478.7 319.8 478.9 320.9 478.6 322.0 478.7 323.1 478.6 324.2 478.7 325.3 479.0 326.4 478.6 327.5 478.7 328.6 479.2 329.7 478.3 330.8 479.0 331.9 479.2 333.0 478.7 334.1 478.6 335.2 479.3 336.3 478.6 337.4 478.6 338.5 478.9 339.6 479.1 340.7 478.3 341.8 478.1 342.9 477.4 344.0 477.2 345.1 476.2 346.2 476.8 347.3 476.5 348.4 477.5 349.5 478.6 350.6 479.3 351.7 478.9 352.8 478.7 353.9 478.5 355.0 479.0 356.1 478.6 357.2 479.2 358.3 479.2 359.4 478.4 360.5 478.4 361.6 478.9 362.7 478.6 363.8 478.7 364.9 478.0 366.0 477.6 367.1 477.6 368.2 478.0 369.3 477.2 370.4 477.2 371.5 477.1 372.6 477.0 373.7 476.8 374.8 477.4 375.9 476.4 377.0 476.2 378.1 477.3 379.2 477.2 380.3 477.4 381.4 476.8 382.5 477.5 383.6 477.5 384.7 476.6 385.8 477.2 386.9 477.1 388.0 476.7 389.1 476.4 390.2 476.1 391.3 476.3 392.4 476.4 393.5 476.7 394.6 477.8 395.7 477.9 396.8 479.0 397.9 478.4 399.0 479.6 400.1 479.5 401.2 479.9 402.5 479.4 403.5 476.0 404.2 462.0 404.8 444.0 405.4 436.3 406.0 440.0 406.7 458.0 407.5 474.0 408.4 479.5 409.5 480.6 410.5 481.2 412.0 481.2 413.5 481.1 415.0 480.7 416.5 481.2 418.0 480.8 419.5 480.9 421.0 481.1 422.5 481.1 424.0 481.0 425.5 481.3 427.0 481.1 428.5 481.0 430.0 480.9 431.5 481.3 433.0 481.1 434.5 481.3 436.0 481.0 437.5 480.9 439.0 481.1 440.5 481.3 442.0 480.9 443.5 481.3 445.0 481.4 446.5 481.3 448.0 481.3 449.5 480.9 451.0 481.2 452.5 481.4 454.0 480.9 455.5 481.0 457.0 481.0 458.5 481.2 460.0 481.2 461.3 481.0 461.6 463.0 462.3 463.0" fill="none" stroke="#1d8882" stroke-width="1.5" stroke-linejoin="round"/></g><path d="M27.0 335.3V482.3H462.5" stroke="#1a1a1a" stroke-width="1.3" fill="none"/><path d="M27.0 335.3H462.5V482.3" stroke="#8a8a8a" stroke-width=".8" fill="none"/><path d="M27.50 482.3v2M69.94 482.3v2M112.38 482.3v2M154.82 482.3v2M197.26 482.3v2M239.70 482.3v2M282.14 482.3v2M324.58 482.3v2M367.02 482.3v2M409.46 482.3v2M451.90 482.3v2M27.0 480.30h-2M27.0 452.37h-2M27.0 424.44h-2M27.0 396.51h-2M27.0 368.58h-2M27.0 340.65h-2" stroke="#555" stroke-width=".6" fill="none"/></svg>
<div class="t" style="left:13.20px;top:478.84px;font:5.5px/6.32px 'Liberation Sans',sans-serif;color:#333;transform:scaleX(0.9711);transform-origin:0 50%;">000</div>
<div class="t" style="left:13.20px;top:450.91px;font:5.5px/6.32px 'Liberation Sans',sans-serif;color:#333;transform:scaleX(0.9711);transform-origin:0 50%;">500</div>
<div class="t" style="left:13.20px;top:422.98px;font:5.5px/6.32px 'Liberation Sans',sans-serif;color:#333;transform:scaleX(0.9711);transform-origin:0 50%;">1000</div>
<div class="t" style="left:13.20px;top:395.05px;font:5.5px/6.32px 'Liberation Sans',sans-serif;color:#333;transform:scaleX(0.9711);transform-origin:0 50%;">1500</div>
<div class="t" style="left:13.20px;top:367.12px;font:5.5px/6.32px 'Liberation Sans',sans-serif;color:#333;transform:scaleX(0.9711);transform-origin:0 50%;">2000</div>
<div class="t" style="left:13.20px;top:339.19px;font:5.5px/6.32px 'Liberation Sans',sans-serif;color:#333;transform:scaleX(0.9711);transform-origin:0 50%;">2500</div>
<div class="t" style="left:26.52px;top:486.92px;font:5.7px/6.55px 'Liberation Sans',sans-serif;color:#333;">0</div>
<div class="t" style="left:65.79px;top:486.92px;font:5.7px/6.55px 'Liberation Sans',sans-serif;color:#333;">200</div>
<div class="t" style="left:108.23px;top:486.92px;font:5.7px/6.55px 'Liberation Sans',sans-serif;color:#333;">400</div>
<div class="t" style="left:150.67px;top:486.92px;font:5.7px/6.55px 'Liberation Sans',sans-serif;color:#333;">600</div>
<div class="t" style="left:193.11px;top:486.92px;font:5.7px/6.55px 'Liberation Sans',sans-serif;color:#333;">800</div>
<div class="t" style="left:233.17px;top:486.92px;font:5.7px/6.55px 'Liberation Sans',sans-serif;color:#333;">1,000</div>
<div class="t" style="left:275.61px;top:486.92px;font:5.7px/6.55px 'Liberation Sans',sans-serif;color:#333;">1,200</div>
<div class="t" style="left:318.05px;top:486.92px;font:5.7px/6.55px 'Liberation Sans',sans-serif;color:#333;">1,400</div>
<div class="t" style="left:360.49px;top:486.92px;font:5.7px/6.55px 'Liberation Sans',sans-serif;color:#333;">1,600</div>
<div class="t" style="left:402.93px;top:486.92px;font:5.7px/6.55px 'Liberation Sans',sans-serif;color:#333;">1,800</div>
<div class="t" style="left:445.37px;top:486.92px;font:5.7px/6.55px 'Liberation Sans',sans-serif;color:#333;">2,000</div>
<div class="t" style="left:245.60px;top:494.52px;font:6.4px/7.36px 'Liberation Sans',sans-serif;color:#222;transform:scaleX(0.9732);transform-origin:0 50%;">Channel</div>
<div class="t" style="left:62.80px;top:462.38px;font:6.3px/7.24px 'Liberation Sans',sans-serif;color:#2a2a2a;transform:scaleX(0.9662);transform-origin:0 50%;">Pb212</div>
<div class="t" style="left:78.30px;top:443.18px;font:6.3px/7.24px 'Liberation Sans',sans-serif;color:#2a2a2a;transform:scaleX(1.0133);transform-origin:0 50%;">Ac228</div>
<div class="t" style="left:112.60px;top:423.98px;font:6.3px/7.24px 'Liberation Sans',sans-serif;color:#2a2a2a;transform:scaleX(0.9456);transform-origin:0 50%;">Tl208</div>
<div class="t" style="left:160.60px;top:405.18px;font:6.3px/7.24px 'Liberation Sans',sans-serif;color:#2a2a2a;transform:scaleX(1.0133);transform-origin:0 50%;">Ac228</div>
<div class="t" style="left:168.80px;top:385.48px;font:6.3px/7.24px 'Liberation Sans',sans-serif;color:#2a2a2a;transform:scaleX(1.0133);transform-origin:0 50%;">Ac228</div>
<div class="t" style="left:258.80px;top:366.38px;font:6.3px/7.24px 'Liberation Sans',sans-serif;color:#2a2a2a;transform:scaleX(1.0133);transform-origin:0 50%;">Ac228</div>
<div class="t" style="left:408.00px;top:347.48px;font:6.3px/7.24px 'Liberation Sans',sans-serif;color:#2a2a2a;transform:scaleX(0.9456);transform-origin:0 50%;">Tl208</div>
<div class="t" style="left:25.20px;top:500.26px;font:bold 7.2px/8.28px 'Liberation Sans',sans-serif;color:#8b1a38;transform:scaleX(0.8441);transform-origin:0 50%;">Rec&nbsp;&nbsp;0 to 999 accumulated</div>
<div class="b" style="left:3px;top:508.6px;width:460px;height:0.9px;background:#9a9a9a;"></div>
<div class="b" style="left:3px;top:509.5px;width:759.4px;height:8.8px;background:#f2f1ee;"></div>
<div class="b" style="left:462.6px;top:44px;width:3.4px;height:465px;background:#f8f8f8;"></div>
<div class="b" style="left:462.9px;top:44px;width:1px;height:465px;background:#909090;"></div>
<div class="b" style="left:466px;top:44px;width:296px;height:465px;background:#f0f0f0;"></div>
<div class="b" style="left:464px;top:43.4px;width:298px;height:0.8px;background:#fcfcfc;"></div>
<div class="b" style="left:468.3px;top:47px;width:14.6px;height:7.8px;background:#000;"></div>
<div class="t" style="left:468.70px;top:46.30px;font:bold 8.7px/10.00px 'Liberation Sans',sans-serif;color:#fff;transform:scaleX(0.8522);transform-origin:0 50%;">Rec</div>
<div class="b" style="left:487px;top:47px;width:48.4px;height:7.8px;background:#000;"></div>
<div class="t" style="left:526.77px;top:47.23px;font:bold 7.6px/8.74px 'Liberation Sans',sans-serif;color:#fff;">11</div>
<div class="b" style="left:615.8px;top:47.2px;width:14.4px;height:9px;background:linear-gradient(180deg,#f6f6f6,#dcdcdc);border:.6px solid #8a8a8a;border-radius:1px;box-sizing:border-box;"></div>
<div class="t" style="left:617.50px;top:48.05px;font:bold 6.7px/7.70px 'Liberation Sans',sans-serif;color:#000;transform:scaleX(0.7342);transform-origin:0 50%;">Auto</div>
<div class="b" style="left:632px;top:47.2px;width:9.8px;height:9px;background:linear-gradient(180deg,#f6f6f6,#dcdcdc);border:.6px solid #8a8a8a;border-radius:1px;box-sizing:border-box;"></div>
<svg class="b" style="left:632.5px;top:47.6px" width="9" height="8.5" viewBox="0 0 9 8.5"><circle cx="3.6" cy="3.4" r="2.3" fill="#eaf4fa" stroke="#222" stroke-width=".8"/><path d="M5.3 5.2l2.6 2.4" stroke="#222" stroke-width="1.2" stroke-linecap="round"/><path d="M2.4 3.4h2.4M3.6 2.2v2.4" stroke="#222" stroke-width=".7"/></svg>
<div class="b" style="left:643.8px;top:47.2px;width:9.8px;height:9px;background:linear-gradient(180deg,#f6f6f6,#dcdcdc);border:.6px solid #8a8a8a;border-radius:1px;box-sizing:border-box;border:1px solid #46b4c8;background:#d8eef4;"></div>
<svg class="b" style="left:644.4px;top:47.6px" width="9" height="8.5" viewBox="0 0 9 8.5"><circle cx="3.6" cy="3.4" r="2.3" fill="#eaf4fa" stroke="#222" stroke-width=".8"/><path d="M5.3 5.2l2.6 2.4" stroke="#222" stroke-width="1.2" stroke-linecap="round"/><path d="M2.4 3.4h2.4" stroke="#222" stroke-width=".7"/></svg>
<div class="b" style="left:468.3px;top:60.4px;width:80px;height:11px;background:linear-gradient(180deg,#f2f2f2,#dedede 55%,#d2d2d2);border:.6px solid #a6a6a6;border-radius:1.5px;box-sizing:border-box;"></div>
<div class="t" style="left:471.40px;top:63.57px;font:bold 5.8px/6.67px 'Liberation Mono',monospace;color:#555;transform:scaleX(1.0038);transform-origin:0 50%;">ISP1U&nbsp;&nbsp;&nbsp;&nbsp;2048&nbsp;cps</div>
<svg class="b" style="left:540.3px;top:64.7px" width="5" height="3" viewBox="0 0 5 3"><path d="M.4 .2h4.2L2.5 2.8z" fill="#111"/></svg>
<div class="t" style="left:556.00px;top:62.53px;font:6.9px/7.93px 'Liberation Sans',sans-serif;color:#222;transform:scaleX(0.7069);transform-origin:0 50%;">Mode</div>
<div class="b" style="left:569px;top:60.4px;width:39.3px;height:10.6px;background:linear-gradient(180deg,#f2f2f2,#dedede 55%,#d2d2d2);border:.6px solid #a6a6a6;border-radius:1.5px;box-sizing:border-box;"></div>
<div class="t" style="left:571.40px;top:62.33px;font:bold 7.6px/8.74px 'Liberation Sans',sans-serif;color:#000;transform:scaleX(0.7529);transform-origin:0 50%;">Sum</div>
<svg class="b" style="left:600.3px;top:64.5px" width="5" height="3" viewBox="0 0 5 3"><path d="M.4 .2h4.2L2.5 2.8z" fill="#111"/></svg>
<div class="b" style="left:609.8px;top:60.4px;width:43.6px;height:10.6px;background:linear-gradient(180deg,#f2f2f2,#dedede 55%,#d2d2d2);border:.6px solid #a6a6a6;border-radius:1.5px;box-sizing:border-box;"></div>
<div class="t" style="left:612.20px;top:62.33px;font:bold 7.6px/8.74px 'Liberation Sans',sans-serif;color:#000;transform:scaleX(0.7638);transform-origin:0 50%;">Normal</div>
<svg class="b" style="left:645.4px;top:64.5px" width="5" height="3" viewBox="0 0 5 3"><path d="M.4 .2h4.2L2.5 2.8z" fill="#111"/></svg>
<div class="t" style="left:468.40px;top:75.12px;font:6.4px/7.36px 'Liberation Sans',sans-serif;color:#333;">Val</div>
<div class="t" style="left:517.40px;top:75.12px;font:6.4px/7.36px 'Liberation Sans',sans-serif;color:#333;">Min</div>
<div class="t" style="left:565.00px;top:75.12px;font:6.4px/7.36px 'Liberation Sans',sans-serif;color:#333;">Max</div>
<div class="b" style="left:466px;top:82px;width:296px;height:0.6px;background:#e0e0e0;"></div>
<div class="t" style="left:499.20px;top:83.49px;font:bold 7.5px/8.62px 'Liberation Sans',sans-serif;color:#8b1a8b;transform:scaleX(0.8632);transform-origin:0 50%;">1517</div>
<div class="t" style="left:547.40px;top:83.49px;font:bold 7.5px/8.62px 'Liberation Sans',sans-serif;color:#000;transform:scaleX(0.8632);transform-origin:0 50%;">1389</div>
<div class="t" style="left:595.00px;top:83.49px;font:bold 7.5px/8.62px 'Liberation Sans',sans-serif;color:#000;transform:scaleX(0.8632);transform-origin:0 50%;">1650</div>
<div class="b" style="left:466px;top:94.6px;width:296px;height:0.7px;background:#d8d8d8;"></div>
<svg class="b" style="left:464px;top:95px" width="298" height="240" viewBox="464 95 298 240"><clipPath id="cr"><rect x="467.6" y="108.2" width="277.0" height="224.0"/></clipPath><rect x="467.6" y="108.2" width="277.0" height="224.0" fill="#ededed"/><path d="M492.30 108.2V332.2M605.00 108.2V332.2M717.70 108.2V332.2M467.6 132.27H744.6M467.6 156.24H744.6M467.6 180.20H744.6M467.6 204.17H744.6M467.6 228.14H744.6M467.6 252.11H744.6M467.6 276.08H744.6M467.6 300.04H744.6M467.6 324.01H744.6" stroke="#cfcfcf" stroke-width=".7" fill="none"/><g clip-path="url(#cr)"><path d="M613.3 108.30 626.7 108.67 631.3 109.05 616.7 109.42 608.4 109.80 618.7 110.17 622.6 110.55 627.1 110.92 605.2 111.30 603.4 111.67 620.3 112.05 617.1 112.42 625.5 112.79 619.4 113.17 608.4 113.54 606.8 113.92 632.4 114.29 606.5 114.67 602.0 115.04 598.7 115.42 609.7 115.79 610.0 116.16 605.5 116.54 607.9 116.91 610.8 117.29 614.5 117.66 618.0 118.04 609.9 118.41 591.7 118.79 614.1 119.16 594.8 119.53 606.0 119.91 594.2 120.28 607.4 120.66 600.3 121.03 609.2 121.41 637.0 121.78 606.7 122.16 614.8 122.53 595.2 122.91 604.6 123.28 613.2 123.65 606.4 124.03 610.6 124.40 608.3 124.78 598.4 125.15 612.6 125.53 600.3 125.90 624.7 126.28 603.4 126.65 614.3 127.03 608.3 127.40 617.0 127.77 603.1 128.15 617.8 128.52 607.8 128.90 620.5 129.27 614.9 129.65 610.8 130.02 602.6 130.40 616.8 130.77 614.2 131.14 625.0 131.52 607.0 131.89 615.5 132.27 615.2 132.64 613.3 133.02 612.8 133.39 612.6 133.77 605.7 134.14 602.0 134.51 607.6 134.89 616.6 135.26 624.9 135.64 620.1 136.01 620.8 136.39 618.2 136.76 617.5 137.14 612.8 137.51 618.0 137.89 626.9 138.26 607.8 138.63 604.4 139.01 628.2 139.38 612.5 139.76 618.9 140.13 617.8 140.51 599.5 140.88 631.4 141.26 625.3 141.63 610.6 142.00 615.6 142.38 609.7 142.75 600.4 143.13 607.1 143.50 611.2 143.88 617.7 144.25 613.8 144.63 607.7 145.00 619.1 145.38 599.8 145.75 613.6 146.12 616.3 146.50 603.5 146.87 589.8 147.25 597.6 147.62 607.8 148.00 610.3 148.37 619.4 148.75 596.3 149.12 605.2 149.50 611.0 149.87 603.7 150.24 583.7 150.62 612.3 150.99 625.9 151.37 614.1 151.74 596.8 152.12 601.4 152.49 607.2 152.87 627.7 153.24 610.9 153.61 606.5 153.99 619.6 154.36 604.9 154.74 622.5 155.11 599.7 155.49 601.7 155.86 612.6 156.24 619.1 156.61 612.2 156.99 609.2 157.36 590.1 157.73 600.2 158.11 601.2 158.48 602.0 158.86 612.2 159.23 603.9 159.61 614.1 159.98 607.8 160.36 604.0 160.73 608.1 161.10 610.9 161.48 614.8 161.85 602.7 162.23 604.8 162.60 594.6 162.98 621.2 163.35 619.8 163.73 605.0 164.10 602.1 164.47 595.2 164.85 607.7 165.22 607.9 165.60 625.5 165.97 607.9 166.35 598.4 166.72 583.2 167.10 617.8 167.47 606.5 167.85 590.1 168.22 606.0 168.59 589.7 168.97 635.4 169.34 613.9 169.72 608.8 170.09 601.8 170.47 583.9 170.84 601.9 171.22 588.9 171.59 608.1 171.97 583.3 172.34 594.3 172.71 613.4 173.09 617.1 173.46 591.6 173.84 588.3 174.21 610.0 174.59 609.8 174.96 593.2 175.34 595.8 175.71 595.9 176.08 591.5 176.46 596.1 176.83 613.6 177.21 608.7 177.58 621.1 177.96 602.0 178.33 601.7 178.71 594.2 179.08 602.1 179.45 591.6 179.83 587.6 180.20 610.1 180.58 617.0 180.95 611.8 181.33 616.5 181.70 607.0 182.08 598.5 182.45 605.9 182.83 602.0 183.20 595.6 183.57 590.6 183.95 592.7 184.32 606.2 184.70 607.8 185.07 602.3 185.45 619.6 185.82 608.5 186.20 612.3 186.57 618.2 186.94 599.9 187.32 589.6 187.69 614.3 188.07 601.3 188.44 619.4 188.82 610.7 189.19 616.7 189.57 614.5 189.94 588.9 190.32 614.1 190.69 601.5 191.06 600.7 191.44 603.5 191.81 614.3 192.19 615.3 192.56 616.3 192.94 592.1 193.31 601.7 193.69 585.5 194.06 605.9 194.44 612.1 194.81 599.7 195.18 608.7 195.56 608.4 195.93 615.3 196.31 598.7 196.68 598.6 197.06 599.1 197.43 621.7 197.81 615.7 198.18 604.7 198.55 607.8 198.93 606.8 199.30 607.6 199.68 603.9 200.05 602.8 200.43 594.5 200.80 600.1 201.18 620.8 201.55 610.9 201.93 606.7 202.30 604.3 202.67 607.0 203.05 609.7 203.42 600.9 203.80 608.6 204.17 609.2 204.55 600.5 204.92 600.3 205.30 598.7 205.67 598.3 206.04 616.1 206.42 587.1 206.79 606.2 207.17 603.3 207.54 603.4 207.92 610.1 208.29 619.7 208.67 610.4 209.04 608.6 209.41 604.6 209.79 609.1 210.16 618.7 210.54 607.1 210.91 600.5 211.29 599.6 211.66 601.1 212.04 598.7 212.41 621.2 212.79 614.6 213.16 609.3 213.53 624.6 213.91 605.5 214.28 618.3 214.66 618.7 215.03 597.5 215.41 597.3 215.78 602.9 216.16 619.4 216.53 622.8 216.91 599.9 217.28 620.3 217.65 607.3 218.03 607.0 218.40 605.4 218.78 607.3 219.15 593.6 219.53 600.8 219.90 598.5 220.28 613.8 220.65 628.1 221.02 633.6 221.40 605.8 221.77 593.1 222.15 604.7 222.52 599.8 222.90 625.9 223.27 613.0 223.65 601.1 224.02 616.0 224.39 612.2 224.77 592.6 225.14 602.4 225.52 604.9 225.89 607.1 226.27 608.1 226.64 603.8 227.02 608.5 227.39 601.5 227.77 598.6 228.14 620.4 228.51 610.0 228.89 610.7 229.26 592.4 229.64 605.4 230.01 614.3 230.39 595.4 230.76 617.0 231.14 603.7 231.51 610.9 231.88 606.2 232.26 609.5 232.63 618.5 233.01 604.1 233.38 622.0 233.76 600.9 234.13 599.7 234.51 614.6 234.88 598.7 235.26 605.1 235.63 616.7 236.00 619.5 236.38 592.6 236.75 613.2 237.13 625.7 237.50 619.5 237.88 606.6 238.25 603.3 238.63 606.1 239.00 598.3 239.38 606.3 239.75 606.9 240.12 607.2 240.50 619.1 240.87 606.2 241.25 595.0 241.62 617.5 242.00 598.2 242.37 603.6 242.75 606.3 243.12 604.2 243.49 598.0 243.87 604.6 244.24 626.3 244.62 600.9 244.99 604.9 245.37 616.0 245.74 612.4 246.12 612.3 246.49 612.9 246.87 587.2 247.24 596.9 247.61 605.6 247.99 608.7 248.36 615.7 248.74 608.0 249.11 601.5 249.49 603.8 249.86 601.3 250.24 605.3 250.61 609.0 250.98 599.8 251.36 595.4 251.73 594.9 252.11 612.4 252.48 614.0 252.86 611.4 253.23 610.2 253.61 609.9 253.98 602.4 254.36 608.5 254.73 593.1 255.10 600.8 255.48 596.1 255.85 609.3 256.23 597.7 256.60 602.1 256.98 606.8 257.35 615.5 257.73 596.3 258.10 595.2 258.47 611.2 258.85 594.0 259.22 608.2 259.60 599.2 259.97 603.6 260.35 588.3 260.72 611.3 261.10 600.5 261.47 597.1 261.84 624.1 262.22 611.9 262.59 637.3 262.97 609.5 263.34 602.8 263.72 607.0 264.09 620.6 264.47 605.9 264.84 610.3 265.22 610.9 265.59 598.1 265.96 607.5 266.34 601.8 266.71 595.1 267.09 614.2 267.46 612.3 267.84 606.9 268.21 598.0 268.59 588.0 268.96 610.4 269.33 605.0 269.71 590.6 270.08 605.1 270.46 591.8 270.83 605.2 271.21 606.6 271.58 608.4 271.96 607.0 272.33 606.5 272.71 594.5 273.08 601.2 273.45 599.9 273.83 602.3 274.20 606.8 274.58 609.8 274.95 618.9 275.33 580.9 275.70 607.7 276.08 602.2 276.45 624.5 276.82 612.4 277.20 589.0 277.57 607.6 277.95 599.3 278.32 613.0 278.70 594.6 279.07 603.3 279.45 603.1 279.82 603.6 280.20 599.3 280.57 588.2 280.94 609.1 281.32 614.1 281.69 604.7 282.07 596.3 282.44 607.5 282.82 611.0 283.19 604.6 283.57 606.3 283.94 619.4 284.31 596.8 284.69 602.1 285.06 590.2 285.44 601.4 285.81 601.3 286.19 599.5 286.56 602.2 286.94 624.9 287.31 607.1 287.69 608.1 288.06 629.1 288.43 609.0 288.81 594.1 289.18 613.5 289.56 601.6 289.93 624.9 290.31 599.0 290.68 605.1 291.06 596.0 291.43 611.4 291.81 601.4 292.18 610.0 292.55 607.2 292.93 605.1 293.30 619.1 293.68 619.0 294.05 611.1 294.43 602.3 294.80 600.7 295.18 612.7 295.55 631.7 295.92 605.9 296.30 602.8 296.67 603.5 297.05 599.7 297.42 600.7 297.80 607.5 298.17 622.1 298.55 609.0 298.92 604.3 299.30 594.1 299.67 610.5 300.04 608.2 300.42 597.2 300.79 598.3 301.17 607.6 301.54 617.0 301.92 613.5 302.29 609.6 302.67 604.7 303.04 610.5 303.41 607.4 303.79 627.1 304.16 597.3 304.54 604.2 304.91 618.9 305.29 605.1 305.66 620.4 306.04 607.2 306.41 609.0 306.79 604.4 307.16 595.4 307.53 599.2 307.91 628.0 308.28 614.0 308.66 613.8 309.03 617.0 309.41 613.7 309.78 617.9 310.16 606.5 310.53 607.0 310.90 618.0 311.28 606.1 311.65 597.5 312.03 607.6 312.40 604.8 312.78 615.4 313.15 603.5 313.53 600.5 313.90 607.2 314.27 624.3 314.65 609.9 315.02 611.8 315.40 610.5 315.77 613.1 316.15 618.8 316.52 623.0 316.90 595.6 317.27 622.6 317.65 610.3 318.02 607.3 318.39 631.7 318.77 608.5 319.14 627.4 319.52 618.4 319.89 600.3 320.27 613.8 320.64 615.8 321.02 607.8 321.39 587.7 321.76 605.4 322.14 606.5 322.51 598.0 322.89 624.2 323.26 605.3 323.64 603.7 324.01 604.3 324.39 599.7 324.76 599.5 325.14 607.1 325.51 608.8 325.88 601.2 326.26 604.7 326.63 592.8 327.01 609.8 327.38 598.2 327.76 606.7 328.13 596.4 328.51 599.7 328.88 606.2 329.25 593.2 329.63 626.3 330.00 603.6 330.38 603.2 330.75 597.2 331.13 618.1 331.50 616.2 331.88" fill="none" stroke="#9e2c68" stroke-width="1.25" stroke-linejoin="round"/></g><path d="M467.6 108.2H744.6V332.2" stroke="#1a1a1a" stroke-width="1.2" fill="none"/><path d="M467.6 108.2V332.2H744.6" stroke="#777" stroke-width=".9" fill="none"/><path d="M744.6 108.30h2M744.6 132.27h2M744.6 156.24h2M744.6 180.20h2M744.6 204.17h2M744.6 228.14h2M744.6 252.11h2M744.6 276.08h2M744.6 300.04h2M744.6 324.01h2M492.30 108.2v-1.6M605.00 108.2v-1.6M717.70 108.2v-1.6" stroke="#555" stroke-width=".6" fill="none"/></svg>
<div class="t" style="left:485.37px;top:98.72px;font:5.7px/6.55px 'Liberation Sans',sans-serif;color:#333;">1,000</div>
<div class="t" style="left:598.07px;top:98.72px;font:5.7px/6.55px 'Liberation Sans',sans-serif;color:#333;">1,500</div>
<div class="t" style="left:710.77px;top:98.72px;font:5.7px/6.55px 'Liberation Sans',sans-serif;color:#333;">2,000</div>
<div class="t" style="left:748.40px;top:105.97px;font:5.8px/6.67px 'Liberation Sans',sans-serif;color:#333;">0</div>
<div class="t" style="left:748.40px;top:129.93px;font:5.8px/6.67px 'Liberation Sans',sans-serif;color:#333;">64</div>
<div class="t" style="left:748.40px;top:153.90px;font:5.8px/6.67px 'Liberation Sans',sans-serif;color:#333;">128</div>
<div class="t" style="left:748.40px;top:177.87px;font:5.8px/6.67px 'Liberation Sans',sans-serif;color:#333;">192</div>
<div class="t" style="left:748.40px;top:201.84px;font:5.8px/6.67px 'Liberation Sans',sans-serif;color:#333;">256</div>
<div class="t" style="left:748.40px;top:225.80px;font:5.8px/6.67px 'Liberation Sans',sans-serif;color:#333;">320</div>
<div class="t" style="left:748.40px;top:249.77px;font:5.8px/6.67px 'Liberation Sans',sans-serif;color:#333;">384</div>
<div class="t" style="left:748.40px;top:273.74px;font:5.8px/6.67px 'Liberation Sans',sans-serif;color:#333;">448</div>
<div class="t" style="left:748.40px;top:297.71px;font:5.8px/6.67px 'Liberation Sans',sans-serif;color:#333;">512</div>
<div class="t" style="left:748.40px;top:321.68px;font:5.8px/6.67px 'Liberation Sans',sans-serif;color:#333;">576</div>
<div class="b" style="left:467.5px;top:340px;width:43px;height:46px;border:.6px solid #ececec;box-sizing:border-box;"></div>
<div class="b" style="left:512px;top:340px;width:63px;height:33px;border:.6px solid #ececec;box-sizing:border-box;"></div>
<div class="b" style="left:577.5px;top:343px;width:70.5px;height:84px;border:.6px solid #e9e9e9;box-sizing:border-box;"></div>
<div class="b" style="left:472.5px;top:347.9px;width:6.2px;height:6.2px;border-radius:50%;background:radial-gradient(circle at 40% 35%,#fff,#dcdcdc);border:.6px solid #9aa2aa;box-sizing:border-box;"></div>
<div class="t" style="left:481.20px;top:347.80px;font:bold 7.3px/8.39px 'Liberation Sans',sans-serif;color:#000;transform:scaleX(0.8036);transform-origin:0 50%;">Single</div>
<div class="b" style="left:472.5px;top:360.7px;width:6.2px;height:6.2px;border-radius:50%;background:radial-gradient(circle at 40% 35%,#fff,#dcdcdc);border:.6px solid #9aa2aa;box-sizing:border-box;"></div>
<div class="b" style="left:474.1px;top:362.3px;width:3px;height:3px;border-radius:50%;background:radial-gradient(circle at 40% 35%,#5a7a9a,#1a2a3a);"></div>
<div class="t" style="left:481.20px;top:360.60px;font:bold 7.3px/8.39px 'Liberation Sans',sans-serif;color:#000;transform:scaleX(0.7806);transform-origin:0 50%;">Accum</div>
<div class="b" style="left:472.5px;top:373.4px;width:6.2px;height:6.2px;border-radius:50%;background:radial-gradient(circle at 40% 35%,#fff,#dcdcdc);border:.6px solid #9aa2aa;box-sizing:border-box;"></div>
<div class="t" style="left:481.20px;top:373.30px;font:bold 7.3px/8.39px 'Liberation Sans',sans-serif;color:#000;transform:scaleX(0.7869);transform-origin:0 50%;">Norm</div>
<div class="t" style="left:470.20px;top:389.60px;font:bold 7.3px/8.39px 'Liberation Sans',sans-serif;color:#000;transform:scaleX(0.7943);transform-origin:0 50%;">Records</div>
<div class="b" style="left:470px;top:399.5px;width:35.5px;height:10.8px;background:#fff;"></div>
<div class="t" style="left:471.20px;top:401.23px;font:bold 7.6px/8.74px 'Liberation Sans',sans-serif;color:#000;transform:scaleX(0.8636);transform-origin:0 50%;">1000</div>
<div class="b" style="left:499.0px;top:400.7px;width:6px;height:8.4px;background:linear-gradient(180deg,#f4f4f4,#d6d6d6);border:.5px solid #8a8a8a;border-radius:1px;box-sizing:border-box;"></div>
<div class="b" style="left:499.0px;top:404.65px;width:6px;height:0.5px;background:#8a8a8a;"></div>
<svg class="b" style="left:500.2px;top:401.9px" width="3.6" height="6.000000000000001" viewBox="0 0 3.6 6.000000000000001"><path d="M0 2.2L1.8 .2 3.6 2.2z" fill="#111"/><path d="M0 3.8000000000000007L1.8 5.800000000000001 3.6 3.8000000000000007z" fill="#111"/></svg>
<div class="b" style="left:515.9px;top:345.29999999999995px;width:6.2px;height:6.2px;border-radius:50%;background:radial-gradient(circle at 40% 35%,#fff,#dcdcdc);border:.6px solid #9aa2aa;box-sizing:border-box;"></div>
<div class="b" style="left:517.5px;top:346.9px;width:3px;height:3px;border-radius:50%;background:radial-gradient(circle at 40% 35%,#5a7a9a,#1a2a3a);"></div>
<div class="t" style="left:524.60px;top:345.20px;font:bold 7.3px/8.39px 'Liberation Sans',sans-serif;color:#000;transform:scaleX(0.7598);transform-origin:0 50%;">Line</div>
<div class="b" style="left:542.9px;top:345.29999999999995px;width:6.2px;height:6.2px;border-radius:50%;background:radial-gradient(circle at 40% 35%,#fff,#dcdcdc);border:.6px solid #9aa2aa;box-sizing:border-box;"></div>
<div class="t" style="left:551.60px;top:345.20px;font:bold 7.3px/8.39px 'Liberation Sans',sans-serif;color:#000;transform:scaleX(0.7886);transform-origin:0 50%;">Bar</div>
<div class="t" style="left:513.00px;top:359.80px;font:bold 7.3px/8.39px 'Liberation Sans',sans-serif;color:#000;transform:scaleX(0.7936);transform-origin:0 50%;">Threshold</div>
<div class="b" style="left:547px;top:358px;width:23.5px;height:11.4px;background:#fff;"></div>
<div class="t" style="left:548.20px;top:360.03px;font:bold 7.6px/8.74px 'Liberation Sans',sans-serif;color:#000;">0</div>
<div class="b" style="left:564.0px;top:359.2px;width:6px;height:9.0px;background:linear-gradient(180deg,#f4f4f4,#d6d6d6);border:.5px solid #8a8a8a;border-radius:1px;box-sizing:border-box;"></div>
<div class="b" style="left:564.0px;top:363.45px;width:6px;height:0.5px;background:#8a8a8a;"></div>
<svg class="b" style="left:565.2px;top:360.4px" width="3.6" height="6.6000000000000005" viewBox="0 0 3.6 6.6000000000000005"><path d="M0 2.2L1.8 .2 3.6 2.2z" fill="#111"/><path d="M0 4.4L1.8 6.4 3.6 4.4z" fill="#111"/></svg>
<div class="b" style="left:513px;top:373.4px;width:6.4px;height:6.4px;background:linear-gradient(135deg,#e4e4e4,#fafafa);border:.6px solid #8c96a0;box-sizing:border-box;"></div>
<svg class="b" style="left:514px;top:374.4px" width="4.6" height="4.6" viewBox="0 0 4.6 4.6"><path d="M.6 2.4l1.2 1.4L4 .6" stroke="#3a4a7a" stroke-width=".9" fill="none"/></svg>
<div class="t" style="left:523.00px;top:373.40px;font:bold 7.3px/8.39px 'Liberation Sans',sans-serif;color:#000;transform:scaleX(0.7585);transform-origin:0 50%;">Cosmic</div>
<div class="t" style="left:513.00px;top:386.80px;font:bold 7.3px/8.39px 'Liberation Sans',sans-serif;color:#000;transform:scaleX(0.7863);transform-origin:0 50%;">Scale</div>
<div class="b" style="left:533px;top:385.6px;width:16px;height:10px;background:linear-gradient(180deg,#f6f6f6,#dcdcdc);border:.6px solid #8a8a8a;border-radius:1px;box-sizing:border-box;"></div>
<div class="t" style="left:535.00px;top:387.15px;font:bold 6.7px/7.70px 'Liberation Sans',sans-serif;color:#000;transform:scaleX(0.7867);transform-origin:0 50%;">Auto</div>
<div class="b" style="left:550.2px;top:385.6px;width:10.4px;height:10px;background:linear-gradient(180deg,#f6f6f6,#dcdcdc);border:.6px solid #8a8a8a;border-radius:1px;box-sizing:border-box;"></div>
<svg class="b" style="left:550.9px;top:386.5px" width="9" height="8.5" viewBox="0 0 9 8.5"><circle cx="3.6" cy="3.4" r="2.3" fill="#eaf4fa" stroke="#222" stroke-width=".8"/><path d="M5.3 5.2l2.6 2.4" stroke="#222" stroke-width="1.2" stroke-linecap="round"/><path d="M2.4 3.4h2.4M3.6 2.2v2.4" stroke="#222" stroke-width=".7"/></svg>
<div class="b" style="left:561.8px;top:385.6px;width:10.4px;height:10px;background:linear-gradient(180deg,#f6f6f6,#dcdcdc);border:.6px solid #8a8a8a;border-radius:1px;box-sizing:border-box;"></div>
<svg class="b" style="left:562.5px;top:386.5px" width="9" height="8.5" viewBox="0 0 9 8.5"><circle cx="3.6" cy="3.4" r="2.3" fill="#eaf4fa" stroke="#222" stroke-width=".8"/><path d="M5.3 5.2l2.6 2.4" stroke="#222" stroke-width="1.2" stroke-linecap="round"/><path d="M2.4 3.4h2.4" stroke="#222" stroke-width=".7"/></svg>
<div class="t" style="left:513.00px;top:404.80px;font:bold 7.3px/8.39px 'Liberation Sans',sans-serif;color:#000;transform:scaleX(0.8745);transform-origin:0 50%;">Prev / Next</div>
<div class="b" style="left:549px;top:403px;width:10.4px;height:10px;background:linear-gradient(180deg,#f6f6f6,#dcdcdc);border:.6px solid #8a8a8a;border-radius:1px;box-sizing:border-box;"></div>
<div class="b" style="left:561px;top:403px;width:10.4px;height:10px;background:linear-gradient(180deg,#f6f6f6,#dcdcdc);border:.6px solid #8a8a8a;border-radius:1px;box-sizing:border-box;"></div>
<svg class="b" style="left:552.4px;top:405.8px" width="3.6" height="4.6" viewBox="0 0 3.6 4.6"><path d="M3.4 .2v4.2L.3 2.3z" fill="#111"/></svg>
<svg class="b" style="left:564.6px;top:405.8px" width="3.6" height="4.6" viewBox="0 0 3.6 4.6"><path d="M.2 .2v4.2L3.3 2.3z" fill="#111"/></svg>
<div class="t" style="left:580.00px;top:336.40px;font:bold 7.3px/8.39px 'Liberation Sans',sans-serif;color:#000;transform:scaleX(0.8320);transform-origin:0 50%;">Regions of Interest</div>
<div class="t" style="left:582.20px;top:347.80px;font:bold 7.3px/8.39px 'Liberation Sans',sans-serif;color:#000;transform:scaleX(0.8476);transform-origin:0 50%;">ROI</div>
<div class="t" style="left:602.00px;top:347.98px;font:bold 7.0px/8.05px 'Liberation Sans',sans-serif;color:#000;transform:scaleX(0.6426);transform-origin:0 50%;">%</div>
<div class="b" style="left:610.4px;top:346px;width:20.8px;height:12px;background:#fff;border:.5px solid #dadada;box-sizing:border-box;"></div>
<div class="t" style="left:612.00px;top:348.61px;font:6.6px/7.59px 'Liberation Sans',sans-serif;color:#a0a0a0;transform:scaleX(0.7194);transform-origin:0 50%;">0.3</div>
<div class="b" style="left:632px;top:346px;width:10.4px;height:12px;background:#e8e8e8;border:.6px solid #bdbdbd;box-sizing:border-box;"></div>
<svg class="b" style="left:633px;top:347px" width="8.4" height="10" viewBox="0 0 8.4 10"><path d="M.8 9L7.6 1" stroke="#b0b0b0" stroke-width=".9"/><circle cx="2" cy="2.4" r=".9" fill="#b0b0b0"/><circle cx="6.4" cy="7.6" r=".9" fill="#b0b0b0"/></svg>
<div class="t" style="left:582.20px;top:357.80px;font:bold 7.3px/8.39px 'Liberation Sans',sans-serif;color:#000;transform:scaleX(0.7846);transform-origin:0 50%;">Name</div>
<div class="b" style="left:582.4px;top:365.6px;width:60.4px;height:11.4px;background:linear-gradient(180deg,#f2f2f2,#dedede 55%,#d2d2d2);border:.6px solid #a6a6a6;border-radius:1.5px;box-sizing:border-box;"></div>
<div class="t" style="left:584.80px;top:367.99px;font:bold 7.5px/8.62px 'Liberation Sans',sans-serif;color:#000;transform:scaleX(0.8534);transform-origin:0 50%;">None</div>
<svg class="b" style="left:634.8px;top:370.1px" width="5" height="3" viewBox="0 0 5 3"><path d="M.4 .2h4.2L2.5 2.8z" fill="#111"/></svg>
<div class="b" style="left:464px;top:508.9px;width:298.4px;height:0.9px;background:#b4b4b4;"></div>
</body></html>
